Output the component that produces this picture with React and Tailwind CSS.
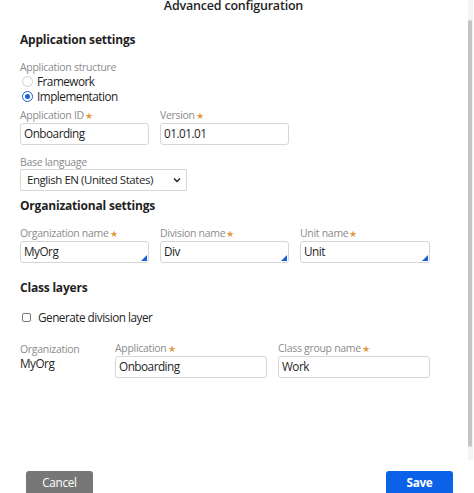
const font = { fontFamily: '"Open Sans", "Noto Sans", sans-serif' };

function Star() {
  return <span className="ml-[1px] text-[9px] tracking-normal text-[#e39a3b]">★</span>;
}

function Field({ label, value, width, corner }) {
  return (
    <div>
      <div className="flex h-[13px] items-center text-[10.5px] leading-none tracking-[-0.3px] text-[#8c8c8c]">
        {label}
        <Star />
      </div>
      <div
        className={`relative mt-[1px] flex h-[22px] items-center rounded-[3px] border border-[#d6d6d6] bg-white px-[3px] text-[11.75px] tracking-[-0.5px] text-[#1f1f1f] ${width}`}
      >
        {value}
        {corner && (
          <span className="absolute bottom-[1px] right-[1px] h-0 w-0 border-b-[6px] border-l-[6px] border-b-[#1a5fd6] border-l-transparent" />
        )}
      </div>
    </div>
  );
}

export default function App() {
  return (
    <div style={font} className="relative h-[493px] w-[474px] overflow-hidden bg-white text-[#1f1f1f]">
      <div className="absolute right-[1px] top-0 h-[460px] w-[5px] bg-[#f4f4f4]">
        <div className="mt-[20px] h-[427px] w-[4px] rounded-sm bg-[#c4c4c4]" />
      </div>

      <div className="-mt-[3px] h-[18px] text-center text-[12.5px] font-semibold leading-[18px] tracking-[-0.2px]">
        <span className="ml-[-7px]">Advanced configuration</span>
      </div>

      <div className="px-5">
        <h2 className="mt-[16px] text-[12px] font-bold leading-[18px] tracking-[-0.2px]">Application settings</h2>

        <div className="mt-[11px] text-[10.5px] leading-[14px] tracking-[-0.3px] text-[#8c8c8c]">
          Application structure
        </div>
        <label className="flex h-[15px] items-center text-[11.75px] tracking-[-0.5px]">
          <span className="ml-[2px] mr-[4px] h-[11px] w-[11px] rounded-full border border-[#d2d2d2] bg-white" />
          Framework
        </label>
        <label className="flex h-[15px] items-center text-[11.75px] tracking-[-0.5px]">
          <span className="ml-[2px] mr-[4px] flex h-[11px] w-[11px] items-center justify-center rounded-full border border-[#1a5fd6] bg-white">
            <span className="h-[5px] w-[5px] rounded-full bg-[#1a5fd6]" />
          </span>
          Implementation
        </label>

        <div className="mt-[5px] flex gap-[11px]">
          <Field label="Application ID" value="Onboarding" width="w-[129px]" />
          <Field label="Version" value="01.01.01" width="w-[129px]" />
        </div>

        <div className="mt-[11px] h-[13px] text-[10.5px] leading-[13px] tracking-[-0.3px] text-[#8c8c8c]">
          Base language
        </div>
        <div className="flex h-[22px] w-[167px] items-center justify-between whitespace-nowrap rounded-[2px] border border-[#d6d6d6] pl-[6px] pr-[4px] text-[11.5px] tracking-[-0.45px]">
          English EN (United States)
          <svg width="10" height="10" viewBox="0 0 10 10">
            <path d="M2 3.5 L5 6.5 L8 3.5" fill="none" stroke="#222" strokeWidth="1.5" />
          </svg>
        </div>

        <h2 className="mt-[6px] text-[12px] font-bold leading-[18px] tracking-[-0.2px]">Organizational settings</h2>

        <div className="mt-[12px] flex gap-[11px]">
          <Field label="Organization name" value="MyOrg" width="w-[129px]" corner />
          <Field label="Division name" value="Div" width="w-[129px]" corner />
          <Field label="Unit name" value="Unit" width="w-[130px]" corner />
        </div>

        <h2 className="mt-[16px] text-[12px] font-bold leading-[18px] tracking-[-0.2px]">Class layers</h2>

        <label className="mt-[13px] flex h-[15px] items-center text-[11.75px] tracking-[-0.5px]">
          <span className="ml-[2px] mr-[7px] h-[9px] w-[9px] rounded-[2px] border border-[#777] bg-white" />
          Generate division layer
        </label>

        <div className="mt-[17px] flex">
          <div className="w-[95px]">
            <div className="text-[10.5px] leading-[14px] tracking-[-0.3px] text-[#8c8c8c]">Organization</div>
            <div className="text-[11.75px] leading-[15px] tracking-[-0.5px]">MyOrg</div>
          </div>
          <div className="flex gap-[11px]">
            <Field label="Application" value="Onboarding" width="w-[152px]" />
            <Field label="Class group name" value="Work" width="w-[152px]" />
          </div>
        </div>
      </div>

      <div className="absolute bottom-0 left-0 right-0 flex justify-between pl-[26px] pr-[21px]">
        <button className="h-[24px] w-[67px] translate-y-[2px] rounded-t-[3px] bg-[#777777] text-[11.75px] tracking-[-0.3px] text-white">
          Cancel
        </button>
        <button className="h-[24px] w-[67px] translate-y-[2px] rounded-t-[3px] bg-[#0b62e8] text-[11.75px] font-bold tracking-[-0.3px] text-white">
          Save
        </button>
      </div>
    </div>
  );
}
